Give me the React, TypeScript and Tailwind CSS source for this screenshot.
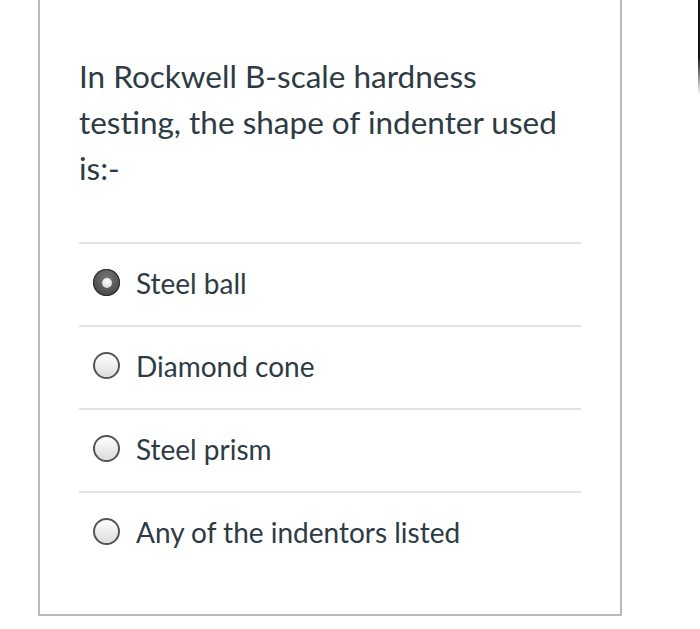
const options = [
  { label: "Steel ball", checked: true },
  { label: "Diamond cone", checked: false },
  { label: "Steel prism", checked: false },
  { label: "Any of the indentors listed", checked: false },
];

function Radio({ checked }: { checked: boolean }) {
  if (checked) {
    return (
      <span className="grid size-[27px] shrink-0 place-items-center rounded-full bg-[radial-gradient(circle_at_50%_35%,#777,#3a3a3a)] shadow-[inset_0_0_0_1px_#2a2a2a]">
        <span className="size-[10px] rounded-full bg-[radial-gradient(circle_at_50%_30%,#fff,#cfcfcf)]" />
      </span>
    );
  }
  return (
    <span className="size-[27px] shrink-0 rounded-full border-2 border-[#555] bg-[linear-gradient(180deg,#ffffff,#dcdcdc)]" />
  );
}

export default function App() {
  return (
    <div className="flex h-[629px] w-[700px] bg-white font-['Lato',sans-serif] text-[#2d3b45]">
      <div className="ml-[38px] flex h-[616px] w-[584px] flex-col border-x-2 border-b-2 border-[#b9b9b9] px-[39px] pt-[53px]">
        <p className="text-[31.5px] leading-[46px]">
          In Rockwell B-scale hardness testing, the shape of indenter used is:-
        </p>
        <div className="mt-[51px]">
          {options.map((o) => (
            <div key={o.label} className="flex h-[83px] items-center border-t-2 border-[#e2e2e2] pb-[4px] pl-[14px]">
              <Radio checked={o.checked} />
              <span className="ml-[16px] text-[28px]">{o.label}</span>
            </div>
          ))}
        </div>
      </div>
      <div className="ml-auto h-[95px] w-[2px] bg-[linear-gradient(180deg,#111_60%,#fff)]" />
    </div>
  );
}
